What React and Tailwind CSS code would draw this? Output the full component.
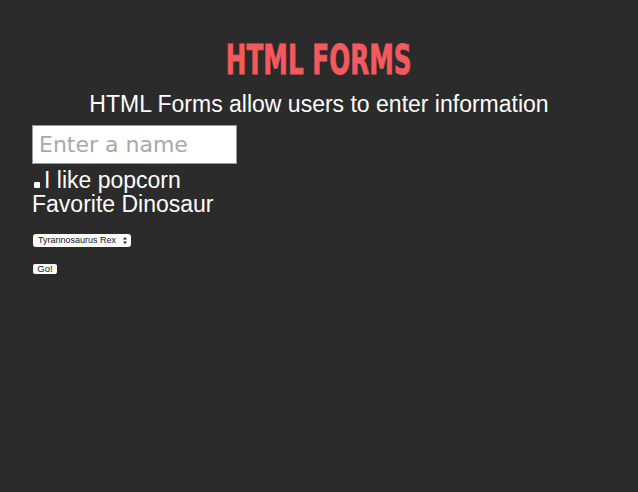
export default function App() {
  return (
    <div className="min-h-[492px] w-full bg-[#2b2b2b] text-white" style={{ fontFamily: '"Liberation Sans", Arial, sans-serif' }}>
      <div className="pt-[38px] flex flex-col">
        <h1 className="text-center text-[#f25a5e] font-bold text-[41px] leading-[44px]">
          <span
            className="inline-block scale-x-[0.67] origin-center [-webkit-text-stroke:0.8px_#f25a5e]"
            style={{ fontFamily: '"DejaVu Sans Condensed", "Liberation Sans", sans-serif' }}
          >
            HTML FORMS
          </span>
        </h1>
        <p className="text-center text-[23px] leading-[26px] mt-[9px]">HTML Forms allow users to enter information</p>
        <form className="px-[32px] mt-[8px] flex flex-col items-start">
          <input
            type="text"
            placeholder="Enter a name"
            className="w-[205px] h-[39px] bg-white border border-[#999] px-[6px] text-[22px] text-black placeholder:text-[#a9a9a9] outline-none"
            style={{ fontFamily: '"DejaVu Sans", sans-serif' }}
          />
          <label className="flex items-end text-[23px] leading-[24px] mt-[4px]">
            <span className="w-[6px] h-[6px] bg-white rounded-[1px] ml-[2px] mb-[4px] mr-[4px]" />
            I like popcorn
          </label>
          <div className="text-[23px] leading-[24px]">Favorite Dinosaur</div>
          <div className="mt-[18px] flex items-center h-[13px] w-[98px] bg-white rounded-[3px] text-[#111] text-[9px] pl-[5px] pr-[4px] justify-between ml-[1px] whitespace-nowrap">
            <span>Tyrannosaurus Rex</span>
            <svg width="4" height="7" viewBox="0 0 4 7" className="fill-[#222]">
              <path d="M0 2.6 L2 0 L4 2.6 Z" />
              <path d="M0 4.4 L2 7 L4 4.4 Z" />
            </svg>
          </div>
          <button type="button" className="mt-[17px] ml-[1px] h-[10px] w-[24px] bg-white rounded-[2px] text-[#111] text-[9.5px] leading-none">Go!</button>
        </form>
      </div>
    </div>
  );
}
